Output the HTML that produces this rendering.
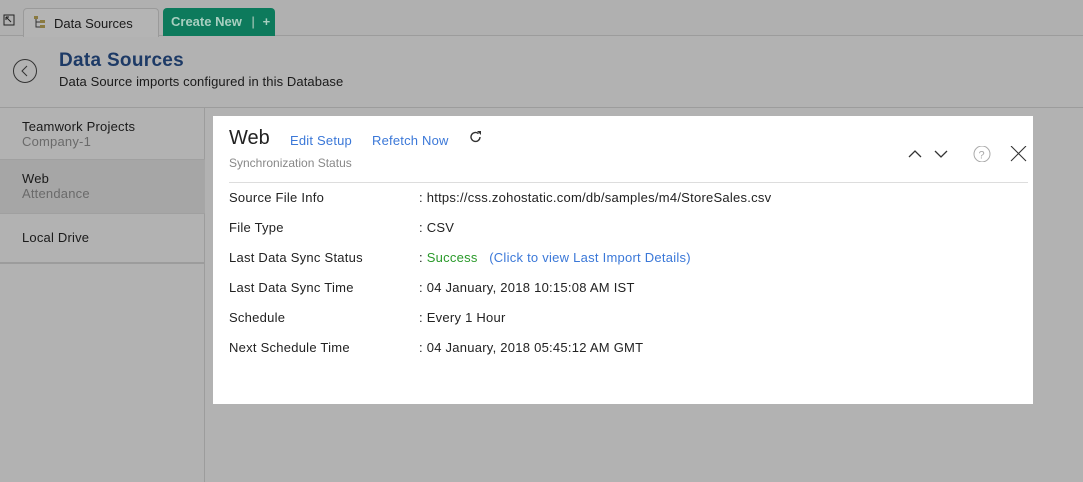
<!DOCTYPE html>
<html><head><style>
*{margin:0;padding:0;box-sizing:border-box}
body{width:1083px;height:482px;background:#b2b2b2;font-family:"Liberation Sans",sans-serif;position:relative;overflow:hidden;color:#1a1a1a}
.abs{position:absolute}
.tabbar{left:0;top:0;width:1083px;height:36px;background:#b0b0b0;border-bottom:1px solid #9c9c9c}
.tab{left:23px;top:8px;width:136px;height:29px;background:#b4b4b4;border:1px solid #9a9a9a;border-bottom:none;border-radius:4px 4px 0 0;font-size:13px;padding:7px 0 0 30px}
.cn{left:163px;top:8px;width:112px;height:28px;background:#0d7a5c;border-radius:4px 4px 0 0;color:#a8cfc0;font-size:13px;font-weight:bold;padding:6px 0 0 8px}
.hdr{left:0;top:37px;width:1083px;height:71px;border-bottom:1px solid #9c9c9c}
.side{left:0;top:108px;width:205px;height:374px;border-right:1px solid #9c9c9c}
.item{position:absolute;left:0;width:205px;border-bottom:1px solid #a0a0a0;font-size:13px;padding-left:22px;letter-spacing:0.2px}
.sub{color:#6a6a6a}
.dlg{left:213px;top:116px;width:820px;height:288px;background:#fff}
.row{position:absolute;left:16px;font-size:13px;color:#222;letter-spacing:0.25px}
.row span{position:absolute;left:190px;white-space:nowrap}
</style></head><body>
<div class="abs tabbar"></div>
<svg class="abs" style="left:3px;top:14px" width="12" height="12" viewBox="0 0 12 12"><rect x="1" y="1" width="10" height="10" fill="none" stroke="#222"/><path d="M3 3l5 5M3 3v3M3 3h3" stroke="#222" fill="none"/></svg>
<div class="abs tab">Data Sources</div>
<svg class="abs" style="left:33px;top:15px" width="14" height="14" viewBox="0 0 14 14"><rect x="1" y="1" width="4" height="3" fill="#8a7a40"/><rect x="7" y="5" width="5" height="3" fill="#8a7a40"/><rect x="7" y="10" width="5" height="3" fill="#8a7a40"/><path d="M3 4v8h4M3 7h4" stroke="#333" fill="none"/></svg>
<div class="abs cn">Create New <span style="color:#7fb3a0;margin:0 4px 0 6px">|</span> +</div>
<div class="abs hdr"></div>
<svg class="abs" style="left:12px;top:58px" width="26" height="26"><circle cx="13" cy="13" r="11.5" fill="none" stroke="#333" stroke-width="1"/><path d="M15 8l-5 5 5 5" fill="none" stroke="#333"/></svg>
<div class="abs" style="left:59px;top:50px;font-size:19px;font-weight:bold;color:#1d3a66;letter-spacing:0.3px">Data Sources</div>
<div class="abs" style="left:59px;top:74px;font-size:13px;letter-spacing:0.1px">Data Source imports configured in this Database</div>
<div class="abs side">
<div class="item" style="top:0;height:52px;padding-top:11px">Teamwork Projects<div class="sub">Company-1</div></div>
<div class="item" style="top:52px;height:54px;padding-top:11px;background:#a6a6a6">Web<div class="sub">Attendance</div></div>
<div class="item" style="top:106px;height:50px;padding-top:16px;border-bottom:2px solid #9c9c9c">Local Drive</div>
</div>
<div class="abs dlg">
<div class="abs" style="left:16px;top:11px;font-size:20px;color:#222">Web</div>
<div class="abs" style="left:77px;top:17px;font-size:13px;color:#3b78d8;letter-spacing:0.2px">Edit Setup</div>
<div class="abs" style="left:159px;top:17px;font-size:13px;color:#3b78d8;letter-spacing:0.2px">Refetch Now</div>
<svg class="abs" style="left:256px;top:14px" width="14" height="14" viewBox="0 0 14 14"><path d="M11 7a4.5 4.5 0 1 1-1.5-3.4" fill="none" stroke="#333" stroke-width="1.4"/><path d="M8 1h4v4z" fill="#333"/></svg>
<div class="abs" style="left:16px;top:40px;font-size:12px;color:#888">Synchronization Status</div>
<svg class="abs" style="left:694px;top:30px" width="130" height="16"><path d="M2 11l6-6 6 6" fill="none" stroke="#333" stroke-width="1.3"/><path d="M28 5l6 6 6-6" fill="none" stroke="#333" stroke-width="1.3"/><circle cx="75" cy="8" r="8" fill="none" stroke="#aaa"/><text x="71.5" y="12.5" font-size="11" fill="#aaa" font-family="Liberation Sans">?</text><path d="M104 0l15 15M119 0l-15 15" stroke="#333" stroke-width="1.1"/></svg>
<div class="abs" style="left:16px;top:66px;width:799px;height:1px;background:#ddd"></div>
<div class="row" style="top:74px">Source File Info<span>: https://css.zohostatic.com/db/samples/m4/StoreSales.csv</span></div>
<div class="row" style="top:104px">File Type<span>: CSV</span></div>
<div class="row" style="top:134px">Last Data Sync Status<span>: <b style="font-weight:normal;color:#2a9a2a">Success</b> &nbsp;&nbsp;<b style="font-weight:normal;color:#3b78d8">(Click to view Last Import Details)</b></span></div>
<div class="row" style="top:164px">Last Data Sync Time<span>: 04 January, 2018 10:15:08 AM IST</span></div>
<div class="row" style="top:194px">Schedule<span>: Every 1 Hour</span></div>
<div class="row" style="top:224px">Next Schedule Time<span>: 04 January, 2018 05:45:12 AM GMT</span></div>
</div>
</body></html>
